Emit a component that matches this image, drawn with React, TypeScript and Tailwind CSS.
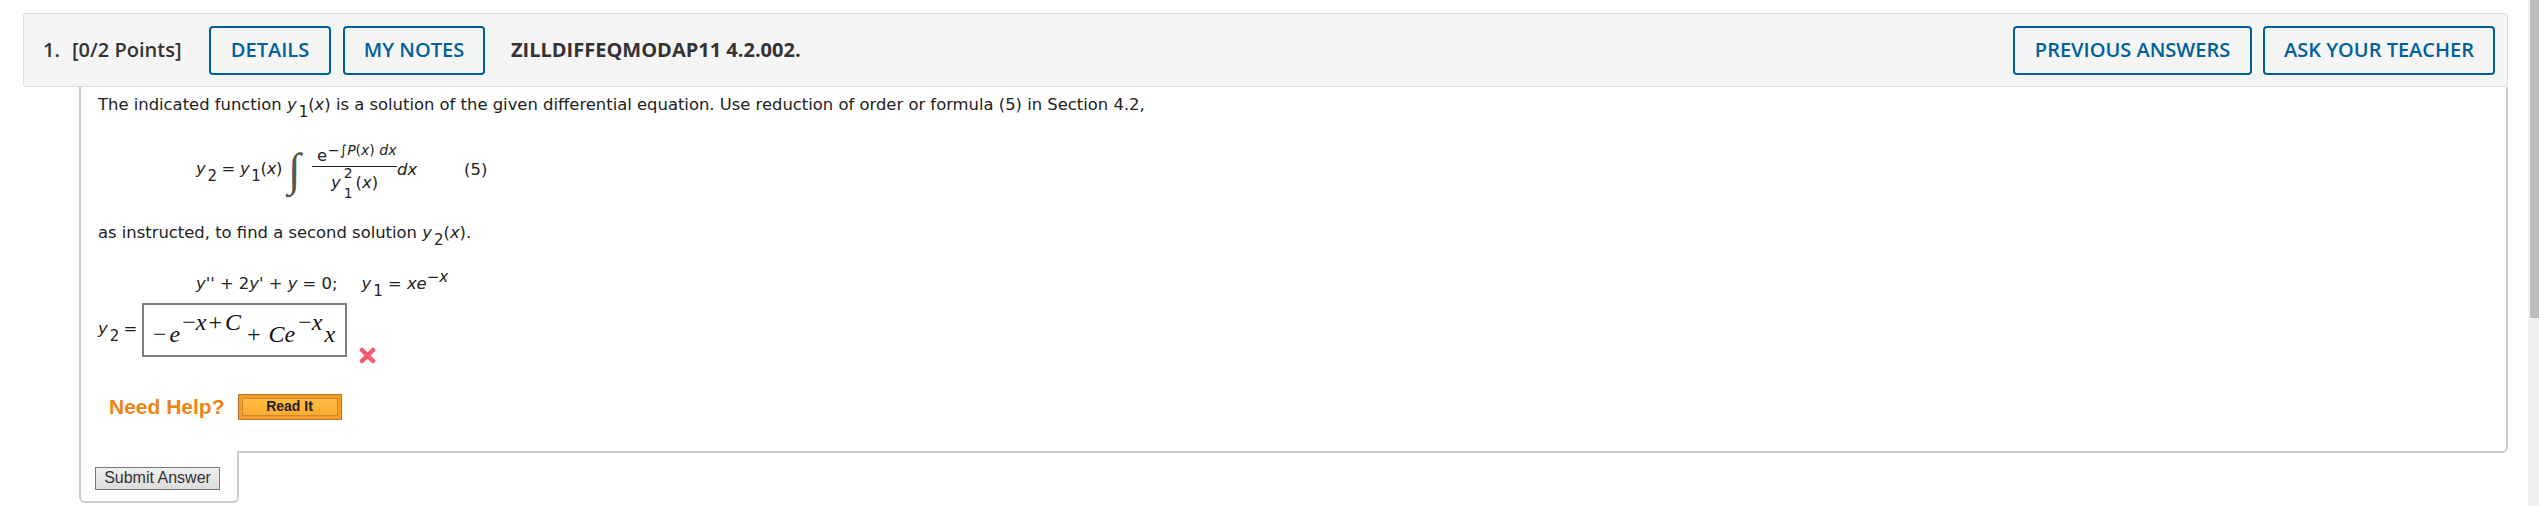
const blueBtn = "h-[49px] border-2 border-[#00619a] rounded-[4px] text-[#00619a] font-semibold text-[20px] flex items-center justify-center";

const V = ({ children }: { children: React.ReactNode }) => <i>{children}</i>;
const Sub = ({ children }: { children: React.ReactNode }) => (
  <span className="text-[15px] align-[-7px] leading-none ml-[2px]">{children}</span>
);

const App = () => {
  return (
    <div className="flex h-[506px] overflow-hidden bg-white">
      <div className="w-[2528px] pt-[13px] pl-[23px] pr-[20px] font-['DejaVu_Sans',sans-serif] text-[16.4px] text-[#222]">
        {/* Question header */}
        <div className="h-[74px] flex items-center bg-[#f5f5f5] border border-[#dedede] rounded-[3px] pl-[19px] pr-[12px] font-['Open_Sans',sans-serif]">
          <span className="font-semibold text-[20px] text-[#333] w-[29px]">1.</span>
          <span className="font-semibold text-[20px] text-[#333] w-[137px]">[0/2 Points]</span>
          <div className={`${blueBtn} w-[122px]`}>DETAILS</div>
          <div className={`${blueBtn} w-[142px] ml-[12px]`}>MY NOTES</div>
          <span className="font-bold text-[20px] text-[#333] ml-[26px]">ZILLDIFFEQMODAP11 4.2.002.</span>
          <div className={`${blueBtn} w-[239px] ml-auto`}>PREVIOUS ANSWERS</div>
          <div className={`${blueBtn} w-[232px] ml-[11px]`}>ASK YOUR TEACHER</div>
        </div>

        {/* Question body */}
        <div className="ml-[56px] h-[366px] border-x-2 border-b-2 border-[#cccccc] rounded-br-[6px] pl-[17px]">
          <p className="pt-[5px] h-[31px] leading-[26px]">
            The indicated function <V>y</V><Sub>1</Sub>(<V>x</V>) is a solution of the given differential equation. Use reduction of order or formula (5) in Section 4.2,
          </p>

          <div className="flex items-center h-[64px] mt-[20px] ml-[98px]">
            <span className="w-[85px] whitespace-nowrap tracking-[-0.3px]"><V>y</V><Sub>2</Sub> = <V>y</V><Sub>1</Sub>(<V>x</V>)</span>
            <span className="font-['Liberation_Serif',serif] italic text-[46px] text-[#555] leading-none ml-[7px] w-[24px]">∫</span>
            <div className="flex flex-col w-[85px]">
              <div className="h-[26px] border-b border-[#222] w-full leading-[18px] pl-[5px] whitespace-nowrap">
                e<span className="text-[14px] align-[6px] ml-[1px]">−∫<V>P</V>(<V>x</V>) <V>dx</V></span>
              </div>
              <div className="h-[32px] flex items-center justify-center">
                <V>y</V>
                <span className="flex flex-col text-[14px] leading-[20px] text-center mx-[3px]">
                  <span>2</span>
                  <span>1</span>
                </span>
                (<V>x</V>)
              </div>
            </div>
            <span><V>dx</V></span>
            <span className="ml-[47px]">(5)</span>
          </div>

          <p className="mt-[18px] h-[26px] leading-[26px]">
            as instructed, to find a second solution <V>y</V><Sub>2</Sub>(<V>x</V>).
          </p>

          <p className="mt-[18px] h-[26px] ml-[98px] leading-[26px]">
            <V>y''</V> + 2<V>y'</V> + <V>y</V> = 0;
            <span className="ml-[24px]"><V>y</V><Sub>1</Sub> = <V>xe</V><span className="text-[15px] align-[7px]"><V>−x</V></span></span>
          </p>

          {/* Answer */}
          <div className="flex items-start mt-[13px]">
            <span className="self-center w-[44px] whitespace-nowrap mb-[7px]"><V>y</V><Sub>2</Sub><span className="-ml-[1px]"> =</span></span>
            <div className="w-[205px] h-[54px] border-2 border-[#808080] flex items-end pl-[9px] pb-[7px] font-['Liberation_Serif',serif] text-[24px] text-[#111] leading-[28px] whitespace-nowrap">
              <span>−<i className="ml-[3px]">e</i></span>
              <span className="mb-[12px] ml-[2px]">−<i>x</i><span className="mx-[2px]">+</span><i className="ml-[1px]">C</i></span>
              <span className="ml-[6px]">+<i className="ml-[8px]">Ce</i></span>
              <span className="mb-[12px] ml-[3px]">−<i>x</i></span>
              <i className="ml-[2px]">x</i>
            </div>
            <svg className="ml-[12px] mt-[44px]" width="17" height="17" viewBox="0 0 17 17">
              <path d="M3 3 L14 14 M14 3 L3 14" stroke="#f65a6c" strokeWidth="4.5" strokeLinecap="round" />
            </svg>
          </div>

          {/* Help */}
          <div className="flex items-center mt-[27px] ml-[11px]">
            <span className="font-['Liberation_Sans',sans-serif] font-bold text-[21px] text-[#ee8512]">Need Help?</span>
            <div className="ml-[13px] w-[104px] h-[26px] border border-[#b3732a] bg-[#f99c27] p-[3px]">
              <div className="h-full border border-[#c98a30] bg-linear-to-b from-[#ffbc40] to-[#fbab30] flex items-center justify-center font-['Liberation_Sans',sans-serif] font-bold text-[14px] text-[#222]">
                Read It
              </div>
            </div>
          </div>
        </div>

        {/* Submit tab */}
        <div className="relative -mt-[2px] ml-[56px] w-[160px] h-[52px] bg-white border-x-2 border-b-2 border-[#cccccc] rounded-b-[6px] pl-[14px] pt-[15px]">
          <button className="w-[125px] h-[23px] border border-[#777] bg-linear-to-b from-[#efefef] to-[#dcdcdc] font-['Liberation_Sans',sans-serif] text-[16px] text-[#333] leading-none">
            Submit Answer
          </button>
        </div>
      </div>

      {/* Scrollbar */}
      <div className="w-[11px] h-full bg-[#f0f0f0] pl-[2px]">
        <div className="h-[318px] bg-[#bdbdbd]" />
      </div>
    </div>
  );
};

export default App;
